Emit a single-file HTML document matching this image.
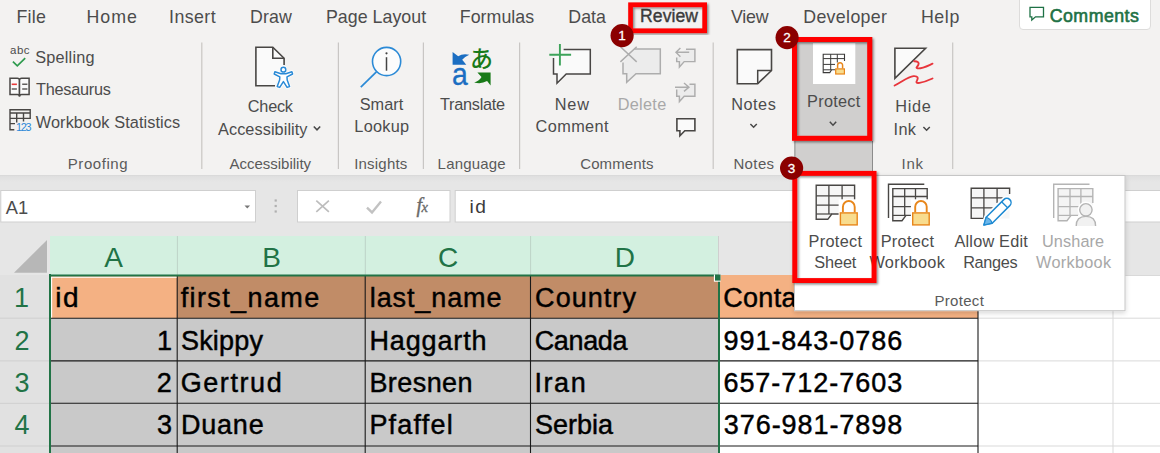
<!DOCTYPE html>
<html lang="en"><head><meta charset="utf-8"><title>Excel Review - Protect Sheet</title>
<style>
html,body{margin:0;padding:0;background:#fff;overflow:hidden}
svg{display:block;font-family:"Liberation Sans", sans-serif;}
text{white-space:pre}
</style></head>
<body>
<svg width="1160" height="453" viewBox="0 0 1160 453">
<defs>
<linearGradient id="rshadow" x1="0" y1="0" x2="0" y2="1"><stop offset="0" stop-color="#dedede"/><stop offset="1" stop-color="#e6e6e6"/></linearGradient>
<filter id="pshadow" x="-5%" y="-5%" width="110%" height="115%"><feDropShadow dx="0" dy="2" stdDeviation="2.5" flood-color="#000" flood-opacity="0.16"/></filter>
<filter id="rsh" x="-10%" y="-10%" width="125%" height="125%"><feDropShadow dx="1.5" dy="1.5" stdDeviation="1.2" flood-color="#000" flood-opacity="0.45"/></filter>
</defs>
<rect x="0" y="0" width="1160" height="176" fill="#f3f2f1" />
<rect x="0" y="176" width="1160" height="277" fill="#e6e6e6" />
<rect x="0" y="175" width="1160" height="7" fill="url(#rshadow)"/>
<line x1="0" y1="175.5" x2="1160" y2="175.5" stroke="#dadada" stroke-width="1" />
<rect x="794.5" y="37" width="78.3" height="138.5" fill="#d0cfce" />
<line x1="794.9" y1="141" x2="794.9" y2="175.5" stroke="#8c8c8c" stroke-width="1" />
<line x1="872.5" y1="141" x2="872.5" y2="175.5" stroke="#8c8c8c" stroke-width="1" />
<text x="16.5" y="22.6" font-size="17.8" fill="#4c4c4c" font-weight="400" textLength="29.3" lengthAdjust="spacing">File</text>
<text x="86.5" y="22.6" font-size="17.8" fill="#4c4c4c" font-weight="400" textLength="50.3" lengthAdjust="spacing">Home</text>
<text x="169.1" y="22.6" font-size="17.8" fill="#4c4c4c" font-weight="400" textLength="46.5" lengthAdjust="spacing">Insert</text>
<text x="249.9" y="22.6" font-size="17.8" fill="#4c4c4c" font-weight="400" textLength="42.0" lengthAdjust="spacing">Draw</text>
<text x="325.9" y="22.6" font-size="17.8" fill="#4c4c4c" font-weight="400" textLength="100.2" lengthAdjust="spacing">Page Layout</text>
<text x="459.7" y="22.6" font-size="17.8" fill="#4c4c4c" font-weight="400" textLength="74.5" lengthAdjust="spacing">Formulas</text>
<text x="568.3" y="22.6" font-size="17.8" fill="#4c4c4c" font-weight="400" textLength="37.7" lengthAdjust="spacing">Data</text>
<text x="730.9" y="22.6" font-size="17.8" fill="#4c4c4c" font-weight="400" textLength="37.8" lengthAdjust="spacing">View</text>
<text x="803.2" y="22.6" font-size="17.8" fill="#4c4c4c" font-weight="400" textLength="83.8" lengthAdjust="spacing">Developer</text>
<text x="920.9" y="22.6" font-size="17.8" fill="#4c4c4c" font-weight="400" textLength="38.4" lengthAdjust="spacing">Help</text>
<text x="640.1" y="22.3" font-size="17.6" fill="#3c3c3c" font-weight="400" textLength="57.9" lengthAdjust="spacing" stroke="#3c3c3c" stroke-width="0.4">Review</text>
<rect x="1019.5" y="-4" width="131" height="33.5" rx="3.5" fill="#fff" stroke="#dddcdb" stroke-width="1"/>
<text x="1049.7" y="22.0" font-size="17.8" fill="#1e7145" font-weight="400" textLength="89.2" lengthAdjust="spacing" stroke="#1e7145" stroke-width="0.6">Comments</text>
<path d="M1030 7.3 H1043.5 V16.8 H1035.5 L1031.8 20 V16.8 H1030 Z" fill="none" stroke="#1e7145" stroke-width="1.3" stroke-linejoin="miter"/>
<line x1="201.8" y1="42.5" x2="201.8" y2="169" stroke="#c8c6c4" stroke-width="1.2" />
<line x1="338.4" y1="42.5" x2="338.4" y2="169" stroke="#c8c6c4" stroke-width="1.2" />
<line x1="423.4" y1="42.5" x2="423.4" y2="169" stroke="#c8c6c4" stroke-width="1.2" />
<line x1="519.6" y1="42.5" x2="519.6" y2="169" stroke="#c8c6c4" stroke-width="1.2" />
<line x1="713.2" y1="42.5" x2="713.2" y2="169" stroke="#c8c6c4" stroke-width="1.2" />
<line x1="952.7" y1="42.5" x2="952.7" y2="169" stroke="#c8c6c4" stroke-width="1.2" />
<text x="10.1" y="54.3" font-size="11.5" fill="#4c4c4c" font-weight="400" textLength="19.3" lengthAdjust="spacing">abc</text>
<path d="M12.9 61.6 L17.3 65.8 L25.2 58.2" fill="none" stroke="#2e9b4e" stroke-width="1.7"/>
<text x="35.2" y="62.9" font-size="16.3" fill="#4c4c4c" font-weight="400" textLength="59.3" lengthAdjust="spacing">Spelling</text>
<g fill="#fafafa" stroke="#484644" stroke-width="1.5"><path d="M10 78.2 H17.3 Q19.5 78.2 19.5 80.3 V96.4 Q19.5 94.5 17.3 94.5 H10 Z"/><path d="M29.1 78.2 H21.7 Q19.5 78.2 19.5 80.3 V96.4 Q19.5 94.5 21.7 94.5 H29.1 Z"/></g>
<path d="M22.2 84.3 H27.4 M22.2 89 H27.4 M11.7 89 H16.9" stroke="#605e5c" stroke-width="1.4" fill="none"/>
<path d="M11.7 84.3 H16.9" stroke="#e83a3a" stroke-width="1.6"/>
<text x="36.0" y="94.5" font-size="16.3" fill="#4c4c4c" font-weight="400" textLength="75.0" lengthAdjust="spacing">Thesaurus</text>
<g fill="none" stroke="#484644" stroke-width="1.4"><path d="M14.3 129.7 H10 V109.7 H30.2 V119"/><path d="M10 113 H30.2 M10 118.4 H30.2 M10 123.6 H15 M16.7 113 V122.5 M23.5 113 V121.5"/></g>
<text x="15.9" y="130.5" font-size="10.8" fill="#2b88d8" font-weight="400" textLength="15.7" lengthAdjust="spacing">123</text>
<text x="35.8" y="127.7" font-size="16.3" fill="#4c4c4c" font-weight="400" textLength="144.4" lengthAdjust="spacing">Workbook Statistics</text>
<text x="67.8" y="169.0" font-size="15" fill="#5a5a5a" font-weight="400" textLength="59.7" lengthAdjust="spacing">Proofing</text>
<path d="M275 85.7 H255.9 V47.3 H272.8 L284.1 58.3 V65" fill="#fafafa" stroke="none"/>
<g fill="none" stroke="#484644" stroke-width="1.6"><path d="M275 85.7 H255.9 V47.3 H272.8 L284.1 58.3 V65"/><path d="M272.8 47.3 V58.3 H284.1"/></g>
<path d="M274.9 71.7 L281 73.7 H285.8 L291.9 71.7 L292.6 74 L287 76.9 L287.2 80 L289.6 86.6 L287.1 87.4 L283.4 81.6 L279.7 87.4 L277.2 86.6 L279.6 80 L279.8 76.9 L274.2 74 Z" fill="#fff" stroke="#fff" stroke-width="3" stroke-linejoin="round"/>
<circle cx="283.4" cy="69.7" r="3.6" fill="#fff"/>
<path d="M274.9 71.7 L281 73.7 H285.8 L291.9 71.7 L292.6 74 L287 76.9 L287.2 80 L289.6 86.6 L287.1 87.4 L283.4 81.6 L279.7 87.4 L277.2 86.6 L279.6 80 L279.8 76.9 L274.2 74 Z" fill="#fff" stroke="#2b8ad6" stroke-width="1.5" stroke-linejoin="round"/>
<circle cx="283.4" cy="69.7" r="2.4" fill="#fff" stroke="#2b8ad6" stroke-width="1.5"/>
<text x="247.8" y="112.4" font-size="16.3" fill="#4c4c4c" font-weight="400" textLength="45.2" lengthAdjust="spacing">Check</text>
<text x="218.0" y="134.8" font-size="16.3" fill="#4c4c4c" font-weight="400" textLength="89.5" lengthAdjust="spacing">Accessibility</text>
<path d="M313.8 126.4 L317.0 129.8 L320.2 126.4" fill="none" stroke="#484848" stroke-width="1.5"/>
<text x="229.4" y="169.0" font-size="15" fill="#5a5a5a" font-weight="400" textLength="81.7" lengthAdjust="spacing">Accessibility</text>
<path d="M376.4 71.9 L360.8 87.1" stroke="#2b8ad6" stroke-width="1.7" fill="none"/>
<circle cx="386.6" cy="61.5" r="14.1" fill="#fcfcfc" stroke="#2b8ad6" stroke-width="1.6"/>
<path d="M386.5 57.2 V70.7" stroke="#444" stroke-width="1.5"/><circle cx="386.5" cy="53.3" r="1.1" fill="#444"/>
<text x="359.7" y="109.6" font-size="16.3" fill="#4c4c4c" font-weight="400" textLength="43.5" lengthAdjust="spacing">Smart</text>
<text x="354.3" y="132.0" font-size="16.3" fill="#4c4c4c" font-weight="400" textLength="54.8" lengthAdjust="spacing">Lookup</text>
<text x="354.2" y="169.0" font-size="15" fill="#5a5a5a" font-weight="400" textLength="53.1" lengthAdjust="spacing">Insights</text>
<text transform="translate(451.9,85.2) scale(0.9,1)" x="0" y="0" font-size="31.5" fill="#1b6ec2" stroke="#1b6ec2" stroke-width="0.35">a</text>
<text x="469.9" y="67.2" font-size="23" fill="#187a18" font-weight="500" font-family='"Liberation Sans", "Noto Sans CJK JP", sans-serif'>あ</text>
<path d="M452.6 51.9 L452.6 64.8 L466.3 64.8 L462.2 59.7 Q465 56.5 469.3 54.7 Q462.5 53.3 458.2 56.2 Z" fill="#1b6ec2"/>
<path d="M477.4 72.4 L490.6 72.4 L490.6 85.6 L487.1 81.1 Q481 84.4 474.2 82.4 Q479.5 81 481.5 77 Z" fill="#187a18"/>
<text x="440.0" y="109.6" font-size="16.3" fill="#4c4c4c" font-weight="400" textLength="65.1" lengthAdjust="spacing">Translate</text>
<text x="437.6" y="169.0" font-size="15" fill="#5a5a5a" font-weight="400" textLength="68.1" lengthAdjust="spacing">Language</text>
<path d="M553.5 57.9 V74 H557 V83.7 L566.2 74 H591 V48.9 H563.6 Z" fill="#fafafa" stroke="none"/>
<path d="M553.5 57.9 V74 H557 V83.3 L566.2 74 H590.3 V49.6 H563.6" fill="none" stroke="#484644" stroke-width="1.5"/>
<path d="M559.9 44 V65.5 M549.3 54.8 H571.1" stroke="#3da35a" stroke-width="1.9" fill="none"/>
<text x="554.7" y="109.6" font-size="16.3" fill="#4c4c4c" font-weight="400" textLength="34.3" lengthAdjust="spacing">New</text>
<text x="535.6" y="132.0" font-size="16.3" fill="#4c4c4c" font-weight="400" textLength="72.9" lengthAdjust="spacing">Comment</text>
<path d="M623 62.4 V73.8 H626.7 V82.3 L636 73.8 H660.3 V49.1 H634.4" fill="#ececec" stroke="#adadad" stroke-width="1.5"/>
<path d="M620.4 46.8 L636.7 61.9 M636.7 46.8 L620.4 61.9" stroke="#adadad" stroke-width="1.5" fill="none"/>
<text x="617.7" y="109.6" font-size="16.3" fill="#a8a8a8" font-weight="400" textLength="48.5" lengthAdjust="spacing">Delete</text>
<path d="M686 49.3 H694.9 V61.6 H684.2 L679.4 67 V61.6 H676.7 V57.5" fill="#ececec" stroke="#adadad" stroke-width="1.45"/>
<path d="M676.3 52.3 H689.2 M680.4 47.9 L676 52.3 L680.4 56.7" fill="none" stroke="#adadad" stroke-width="1.45"/>
<path d="M689.5 84.2 H694.9 V96.3 H684.2 L679.4 101.6 V96.3 H676.7 V89.5" fill="#ececec" stroke="#adadad" stroke-width="1.45"/>
<path d="M675 87.2 H688.7 M684 83 L688.9 87.2 L684 91.4" fill="none" stroke="#adadad" stroke-width="1.45"/>
<path d="M676.9 118.8 H694.9 V130.7 H684.8 L679.9 135.7 V130.7 H676.9 Z" fill="#fafafa" stroke="#484644" stroke-width="1.6"/>
<text x="580.2" y="169.0" font-size="15" fill="#5a5a5a" font-weight="400" textLength="73.3" lengthAdjust="spacing">Comments</text>
<path d="M737.3 49.6 H771.5 V70.5 L757.7 83.7 H737.3 Z" fill="#fafafa" stroke="#484644" stroke-width="1.6" stroke-linejoin="miter"/>
<path d="M771.5 70.5 H757.7 V83.7" fill="none" stroke="#484644" stroke-width="1.5"/>
<text x="731.2" y="109.8" font-size="16.3" fill="#4c4c4c" font-weight="400" textLength="44.6" lengthAdjust="spacing">Notes</text>
<path d="M750.4 123.9 L753.6 127.2 L756.8 123.9" fill="none" stroke="#484848" stroke-width="1.5"/>
<text x="733.4" y="169.0" font-size="15" fill="#5a5a5a" font-weight="400" textLength="40.7" lengthAdjust="spacing">Notes</text>
<rect x="813" y="43" width="42.3" height="41" fill="#ffffff" />
<g fill="none" stroke="#3b3a39" stroke-width="1.1"><path d="M844.5 61 V54.2 H823.2 V72.6 H829.8 L831.6 69.8 H835"/><path d="M823.2 69.8 H831.6 M823.2 58.6 H844.5 M823.2 64.4 H835 M830.7 54.2 V69.8 M837.3 54.2 V62.5" stroke-width="1"/></g>
<path d="M837.6 68.6 V65.2 A2.5 2.5 0 0 1 842.6 65.2 V68.6" fill="#fff" stroke="#e8861a" stroke-width="1.5"/>
<rect x="835.7" y="68.9" width="8.7" height="5.1" fill="#f8dc8e" stroke="#e8861a" stroke-width="1.2"/>
<text x="807.1" y="107.0" font-size="16.3" fill="#4c4c4c" font-weight="400" textLength="53.2" lengthAdjust="spacing">Protect</text>
<path d="M829.8 121.8 L833.0 125.2 L836.2 121.8" fill="none" stroke="#484848" stroke-width="1.5"/>
<path d="M894.9 48.2 H925.6 L894.9 78.4 Z" fill="#fafafa" stroke="#484644" stroke-width="1.6"/>
<path d="M914.2 61.2 C917 61 919.6 62.5 918.4 64.8 C917.2 67 915.3 67.7 917.5 68.3 C921 69.2 928 65.6 932.5 63.7" fill="none" stroke="#e8353b" stroke-width="1.9" stroke-linecap="round"/>
<path d="M894.6 85.5 C901 82.5 908 76.6 913.5 76.1 C918.5 75.8 918.2 78.5 917 80.5 C915.7 82.5 916.5 83.4 919.5 82.9 C924 82.1 929 80.1 932.5 78.5" fill="none" stroke="#e8353b" stroke-width="1.9" stroke-linecap="round"/>
<text x="895.2" y="111.9" font-size="16.3" fill="#4c4c4c" font-weight="400" textLength="35.7" lengthAdjust="spacing">Hide</text>
<text x="893.5" y="134.5" font-size="16.3" fill="#4c4c4c" font-weight="400" textLength="22.5" lengthAdjust="spacing">Ink</text>
<path d="M923.4 126.9 L926.6 130.2 L929.8 126.9" fill="none" stroke="#484848" stroke-width="1.5"/>
<text x="901.6" y="169.0" font-size="15" fill="#5a5a5a" font-weight="400" textLength="21.4" lengthAdjust="spacing">Ink</text>
<rect x="0.8" y="190.5" width="254.7" height="31.5" fill="#fff" stroke="#cfcfcf" stroke-width="1"/>
<text x="5.8" y="214.0" font-size="18.3" fill="#4c4c4c" font-weight="400" textLength="22.4" lengthAdjust="spacing">A1</text>
<path d="M244.5 205.4 H250.1 L247.3 208.4 Z" fill="#777"/>
<rect x="274.6" y="199.4" width="2.2" height="2.2" fill="#b0b0b0"/>
<rect x="274.6" y="204.9" width="2.2" height="2.2" fill="#b0b0b0"/>
<rect x="274.6" y="210.4" width="2.2" height="2.2" fill="#b0b0b0"/>
<rect x="297.5" y="190.5" width="152.5" height="31.5" fill="#fff" stroke="#cfcfcf" stroke-width="1"/>
<path d="M316.3 200.6 L328.9 211.9 M328.9 200.6 L316.3 211.9" stroke="#bdbdbd" stroke-width="1.7" fill="none"/>
<path d="M367 207.6 L372 212.4 L381 201.6" stroke="#c2c2c2" stroke-width="2.4" fill="none"/>
<text x="416.5" y="211.6" font-size="20" fill="#6a6a6a" stroke="#6a6a6a" stroke-width="0.35" font-style="italic" font-weight="400" font-family='"Liberation Serif", serif'>f<tspan font-size="14.5" dx="-0.5">x</tspan></text>
<rect x="455.2" y="190.5" width="720" height="31.5" fill="#fff" stroke="#cfcfcf" stroke-width="1"/>
<text x="469.5" y="213.2" font-size="19.2" fill="#3a3a3a" font-weight="400" textLength="16.4" lengthAdjust="spacing">id</text>
<rect x="0" y="236" width="1160" height="40" fill="#e6e6e6" />
<rect x="50" y="236" width="668.5" height="39" fill="#d3f0e0" />
<line x1="177.4" y1="236" x2="177.4" y2="275" stroke="#bdd3c7" stroke-width="1" />
<line x1="365.3" y1="236" x2="365.3" y2="275" stroke="#bdd3c7" stroke-width="1" />
<line x1="530.6" y1="236" x2="530.6" y2="275" stroke="#bdd3c7" stroke-width="1" />
<line x1="718.5" y1="236" x2="718.5" y2="275" stroke="#cfcfcf" stroke-width="1" />
<path d="M47 240 V272.8 H14 Z" fill="#b7b7b7"/>
<text x="104.3" y="266.6" font-size="28" fill="#217346" font-weight="400">A</text>
<text x="262.2" y="266.6" font-size="28" fill="#217346" font-weight="400">B</text>
<text x="437.9" y="266.6" font-size="28" fill="#217346" font-weight="400">C</text>
<text x="614.7" y="266.6" font-size="28" fill="#217346" font-weight="400">D</text>
<rect x="0" y="275" width="1160" height="178" fill="#ffffff" />
<rect x="0" y="275" width="49.5" height="178" fill="#e1e1e1" />
<line x1="0" y1="318.2" x2="49.5" y2="318.2" stroke="#cfcfcf" stroke-width="1" />
<line x1="0" y1="360.9" x2="49.5" y2="360.9" stroke="#cfcfcf" stroke-width="1" />
<line x1="0" y1="403.3" x2="49.5" y2="403.3" stroke="#cfcfcf" stroke-width="1" />
<line x1="0" y1="446" x2="49.5" y2="446" stroke="#cfcfcf" stroke-width="1" />
<line x1="978" y1="318.2" x2="1160" y2="318.2" stroke="#d9d9d9" stroke-width="1" />
<line x1="978" y1="360.9" x2="1160" y2="360.9" stroke="#d9d9d9" stroke-width="1" />
<line x1="978" y1="403.3" x2="1160" y2="403.3" stroke="#d9d9d9" stroke-width="1" />
<line x1="978" y1="446" x2="1160" y2="446" stroke="#d9d9d9" stroke-width="1" />
<line x1="1113" y1="275" x2="1113" y2="453" stroke="#d9d9d9" stroke-width="1" />
<line x1="978" y1="275.5" x2="1160" y2="275.5" stroke="#d9d9d9" stroke-width="1" />
<rect x="50" y="275" width="127" height="43" fill="#f4b183" />
<rect x="177" y="275" width="541.5" height="43" fill="#c18c67" />
<rect x="718.5" y="275" width="259.5" height="43" fill="#f4b183" />
<rect x="50" y="318" width="668.5" height="135" fill="#c9c9c9" />
<line x1="50" y1="318.2" x2="978" y2="318.2" stroke="#1a1a1a" stroke-width="1.1" />
<line x1="50" y1="360.9" x2="978" y2="360.9" stroke="#1a1a1a" stroke-width="1.1" />
<line x1="50" y1="403.3" x2="978" y2="403.3" stroke="#1a1a1a" stroke-width="1.1" />
<line x1="50" y1="446" x2="978" y2="446" stroke="#1a1a1a" stroke-width="1.1" />
<line x1="177.2" y1="276" x2="177.2" y2="453" stroke="#1a1a1a" stroke-width="1.1" />
<line x1="365.2" y1="276" x2="365.2" y2="453" stroke="#1a1a1a" stroke-width="1.1" />
<line x1="530.5" y1="276" x2="530.5" y2="453" stroke="#1a1a1a" stroke-width="1.1" />
<line x1="978" y1="275" x2="978" y2="453" stroke="#1a1a1a" stroke-width="1.1" />
<path d="M51.6 317.4 V277.1 H176.6" fill="none" stroke="#fff" stroke-width="1.1"/>
<line x1="50" y1="274" x2="50" y2="453" stroke="#217346" stroke-width="2" />
<line x1="49" y1="275.5" x2="719" y2="275.5" stroke="#217346" stroke-width="2" />
<line x1="719" y1="281" x2="719" y2="453" stroke="#217346" stroke-width="2" />
<rect x="713.9" y="274.5" width="6.6" height="7.2" fill="#fff"/>
<rect x="715" y="274.5" width="5.5" height="6.1" fill="#217346"/>
<text x="13.9" y="307.1" font-size="27" fill="#217346" font-weight="400">1</text>
<text x="14.4" y="350.0" font-size="27" fill="#217346" font-weight="400">2</text>
<text x="14.6" y="391.8" font-size="27" fill="#217346" font-weight="400">3</text>
<text x="14.4" y="434.3" font-size="27" fill="#217346" font-weight="400">4</text>
<text x="55.3" y="307.1" font-size="28" fill="#000" font-weight="400" textLength="23.3" lengthAdjust="spacing" stroke="#000" stroke-width="0.45">id</text>
<text x="180.7" y="307.1" font-size="27" fill="#000" font-weight="400" textLength="138.5" lengthAdjust="spacing" stroke="#000" stroke-width="0.45">first_name</text>
<text x="369.8" y="307.1" font-size="27" fill="#000" font-weight="400" textLength="131.7" lengthAdjust="spacing" stroke="#000" stroke-width="0.45">last_name</text>
<text x="535.1" y="307.1" font-size="27" fill="#000" font-weight="400" textLength="100.8" lengthAdjust="spacing" stroke="#000" stroke-width="0.45">Country</text>
<text x="723.2" y="307.1" font-size="27" fill="#000" font-weight="400" textLength="73.3" lengthAdjust="spacing" stroke="#000" stroke-width="0.45">Conta</text>
<text x="156.9" y="350.0" font-size="27" fill="#000" font-weight="400" stroke="#000" stroke-width="0.45">1</text>
<text x="156.8" y="391.8" font-size="27" fill="#000" font-weight="400" stroke="#000" stroke-width="0.45">2</text>
<text x="157.0" y="434.3" font-size="27" fill="#000" font-weight="400" stroke="#000" stroke-width="0.45">3</text>
<text x="180.9" y="350.0" font-size="27" fill="#000" font-weight="400" textLength="82.2" lengthAdjust="spacing" stroke="#000" stroke-width="0.45">Skippy</text>
<text x="180.7" y="391.8" font-size="27" fill="#000" font-weight="400" textLength="101.0" lengthAdjust="spacing" stroke="#000" stroke-width="0.45">Gertrud</text>
<text x="180.9" y="434.3" font-size="27" fill="#000" font-weight="400" textLength="82.8" lengthAdjust="spacing" stroke="#000" stroke-width="0.45">Duane</text>
<text x="369.4" y="350.0" font-size="27" fill="#000" font-weight="400" textLength="117.2" lengthAdjust="spacing" stroke="#000" stroke-width="0.45">Haggarth</text>
<text x="369.4" y="391.8" font-size="27" fill="#000" font-weight="400" textLength="103.2" lengthAdjust="spacing" stroke="#000" stroke-width="0.45">Bresnen</text>
<text x="369.4" y="434.3" font-size="27" fill="#000" font-weight="400" textLength="83.3" lengthAdjust="spacing" stroke="#000" stroke-width="0.45">Pfaffel</text>
<text x="534.7" y="350.0" font-size="27" fill="#000" font-weight="400" textLength="92.8" lengthAdjust="spacing" stroke="#000" stroke-width="0.45">Canada</text>
<text x="534.5" y="391.8" font-size="27" fill="#000" font-weight="400" textLength="51.2" lengthAdjust="spacing" stroke="#000" stroke-width="0.45">Iran</text>
<text x="534.9" y="434.3" font-size="27" fill="#000" font-weight="400" textLength="78.1" lengthAdjust="spacing" stroke="#000" stroke-width="0.45">Serbia</text>
<text x="723.5" y="350.0" font-size="27" fill="#000" font-weight="400" textLength="178.7" lengthAdjust="spacing" stroke="#000" stroke-width="0.45">991-843-0786</text>
<text x="723.4" y="391.8" font-size="27" fill="#000" font-weight="400" textLength="178.8" lengthAdjust="spacing" stroke="#000" stroke-width="0.45">657-712-7603</text>
<text x="723.8" y="434.3" font-size="27" fill="#000" font-weight="400" textLength="178.4" lengthAdjust="spacing" stroke="#000" stroke-width="0.45">376-981-7898</text>
<rect x="794.5" y="175.5" width="330.5" height="135.2" fill="#fff" stroke="#c6c6c6" stroke-width="1" filter="url(#pshadow)"/>
<g fill="none" stroke="#484644" stroke-width="1.4"><path d="M816.2 185.3 H854.6 V214 H831.8 L827.8 219.3 H816.2 Z" fill="#f6f6f6" stroke="none"/><path d="M854.6 201 V185.3 H816.2 V219.3 H827.8 L831.8 214 H840"/><path d="M816.2 214 H831.8" stroke-width="1.2"/><path d="M816.2 195.9 H854.6 M816.2 205.2 H840 M828.9 185.3 V214 M842.1 185.3 V201" stroke-width="1.3"/></g>
<rect x="838.6" y="199.3" width="20.5" height="27" fill="#fff" />
<path d="M842.9 212.2 V206.9 A5.9 5.9 0 0 1 854.7 206.9 V212.2" fill="#fff" stroke="#e8861a" stroke-width="1.9"/>
<rect x="840.4000000000001" y="212.89999999999998" width="16.799999999999933" height="12.000000000000005" fill="#f8dc8e" stroke="#e8861a" stroke-width="1.4"/>
<text x="808.6" y="246.5" font-size="16.3" fill="#4c4c4c" font-weight="400" textLength="53.4" lengthAdjust="spacing">Protect</text>
<text x="814.3" y="268.3" font-size="16.3" fill="#4c4c4c" font-weight="400" textLength="42.1" lengthAdjust="spacing">Sheet</text>
<g fill="none" stroke="#484644" stroke-width="1.4"><path d="M888.5 218.1 V184.2 H924.3"/><path d="M892.8 188.6 H927.2 V215.4 H906 L902 220.7 H892.8 Z" fill="#f6f6f6" stroke="none"/><path d="M927.2 201 V188.6 H892.8 V220.7 H902 L906 215.4 H912"/><path d="M892.8 215.4 H906" stroke-width="1.2"/><path d="M892.8 196.5 H927.2 M892.8 206.7 H912 M904.7 188.6 V215.4 M915.5 188.6 V201" stroke-width="1.3"/></g>
<rect x="910.9" y="199.3" width="20.3" height="27" fill="#fff" />
<path d="M915.2 212.2 V206.8 A5.7 5.7 0 0 1 926.7 206.8 V212.2" fill="#fff" stroke="#e8861a" stroke-width="1.9"/>
<rect x="912.7" y="212.89999999999998" width="16.49999999999998" height="12.000000000000005" fill="#f8dc8e" stroke="#e8861a" stroke-width="1.4"/>
<text x="880.7" y="246.5" font-size="16.3" fill="#4c4c4c" font-weight="400" textLength="53.3" lengthAdjust="spacing">Protect</text>
<text x="869.4" y="268.3" font-size="16.3" fill="#4c4c4c" font-weight="400" textLength="75.5" lengthAdjust="spacing">Workbook</text>
<g fill="none" stroke="#484644" stroke-width="1.4"><path d="M971.2 188.2 H1009.6 V218.4 H971.2 Z" fill="#f6f6f6" stroke="none"/><path d="M1009.6 194 V188.2 H971.2 V218.4 H983.5"/><path d="M971.2 197.9 H1002.7 M971.2 207.8 H992.8 M983.9 188.2 V218.4 M997.1 188.2 V203" stroke-width="1.3"/></g>
<path d="M983.9 225 L986.2 217.2 L1003.8 199.6 A4.2 4.2 0 0 1 1009.8 205.6 L992.2 223.2 Z" fill="#fff" stroke="#fff" stroke-width="4.5" stroke-linejoin="round"/>
<path d="M983.9 225 L986.2 217.2 L1003.8 199.6 A4.2 4.2 0 0 1 1009.8 205.6 L992.2 223.2 Z" fill="#fff" stroke="#1e8ad2" stroke-width="1.5" stroke-linejoin="round"/>
<path d="M983.9 225 L986.2 217.2 Q990.5 218.5 992.2 223.2 Z" fill="#6cb6ea" stroke="#1e8ad2" stroke-width="1.2" stroke-linejoin="round"/>
<path d="M1001.6 201.8 L1007.6 207.8" stroke="#1e8ad2" stroke-width="1.3" fill="none"/>
<text x="954.4" y="246.5" font-size="16.3" fill="#4c4c4c" font-weight="400" textLength="73.4" lengthAdjust="spacing">Allow Edit</text>
<text x="963.2" y="268.3" font-size="16.3" fill="#4c4c4c" font-weight="400" textLength="54.4" lengthAdjust="spacing">Ranges</text>
<g fill="none" stroke="#b4b4b4" stroke-width="1.4"><path d="M1053.7 218 V184.2 H1089.5"/><path d="M1058.1 188.6 H1092.8 V215.4 H1071 L1067 220.7 H1058.1 Z" fill="#f4f4f4" stroke="none"/><path d="M1092.8 203 V188.6 H1058.1 V220.7 H1067 L1071 215.4 H1078"/><path d="M1058.1 215.4 H1071" stroke-width="1.2"/><path d="M1058.1 196.5 H1092.8 M1058.1 206.7 H1080 M1070 188.6 V215.4 M1080.9 188.6 V204" stroke-width="1.3"/></g>
<circle cx="1085.9" cy="209.8" r="8.3" fill="#fff"/>
<path d="M1074.3 227 V224 Q1074.3 214.3 1085.9 214.3 Q1097.5 214.3 1097.5 224 V227 Z" fill="#fff"/>
<path d="M1076.2 226 Q1076.2 216.4 1085.9 216.4 Q1095.6 216.4 1095.6 226" fill="#f1f1f1" stroke="#b4b4b4" stroke-width="1.4"/>
<circle cx="1085.9" cy="209.8" r="6.2" fill="#f1f1f1" stroke="#b4b4b4" stroke-width="1.4"/>
<text x="1042.0" y="246.5" font-size="16.3" fill="#a8a8a8" font-weight="400" textLength="62.1" lengthAdjust="spacing">Unshare</text>
<text x="1036.1" y="268.3" font-size="16.3" fill="#a8a8a8" font-weight="400" textLength="75.0" lengthAdjust="spacing">Workbook</text>
<text x="934.4" y="305.6" font-size="15" fill="#5a5a5a" font-weight="400" textLength="49.4" lengthAdjust="spacing">Protect</text>
<rect x="630.5500000000001" y="4.75" width="74.09999999999995" height="26.000000000000004" fill="none" stroke="#ff0000" stroke-width="4.7" filter="url(#rsh)"/>
<rect x="794.5" y="39.5" width="75.20000000000005" height="98.80000000000001" fill="none" stroke="#ff0000" stroke-width="5" filter="url(#rsh)"/>
<rect x="794.75" y="173.35" width="79.30000000000004" height="107.19999999999999" fill="none" stroke="#ff0000" stroke-width="4.9" filter="url(#rsh)"/>
<circle cx="622.1" cy="35.6" r="11.6" fill="#8b0000"/>
<text x="622.1" y="40.4" font-size="13.5" fill="#fff" stroke="#fff" stroke-width="0.3" text-anchor="middle">1</text>
<circle cx="787.1" cy="37.6" r="11.6" fill="#8b0000"/>
<text x="787.1" y="42.4" font-size="13.5" fill="#fff" stroke="#fff" stroke-width="0.3" text-anchor="middle">2</text>
<circle cx="791.6" cy="168.1" r="11.6" fill="#8b0000"/>
<text x="791.6" y="172.9" font-size="13.5" fill="#fff" stroke="#fff" stroke-width="0.3" text-anchor="middle">3</text>
</svg>
</body></html>
